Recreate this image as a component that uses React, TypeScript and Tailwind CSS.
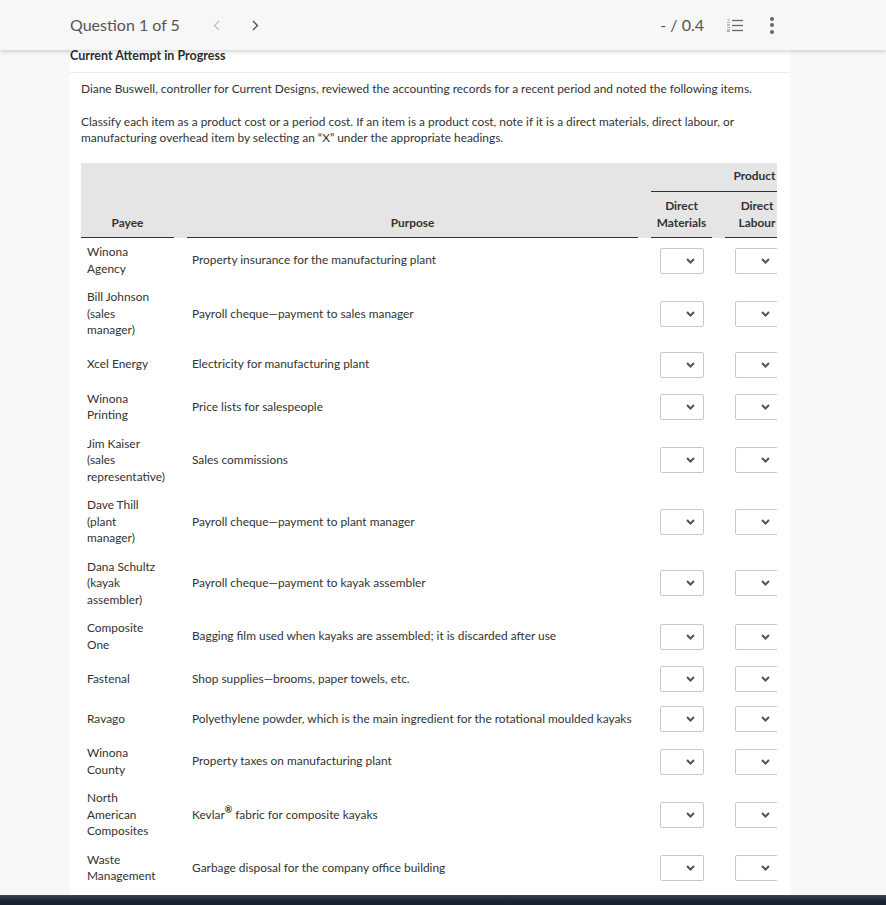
import React from 'react';

// --- DATA ---
interface Item {
  payee: string[];
  purpose: React.ReactNode;
}

const ITEMS: Item[] = [
  { payee: ['Winona', 'Agency'], purpose: 'Property insurance for the manufacturing plant' },
  { payee: ['Bill Johnson', '(sales', 'manager)'], purpose: 'Payroll cheque\u2014payment to sales manager' },
  { payee: ['Xcel Energy'], purpose: 'Electricity for manufacturing plant' },
  { payee: ['Winona', 'Printing'], purpose: 'Price lists for salespeople' },
  { payee: ['Jim Kaiser', '(sales', 'representative)'], purpose: 'Sales commissions' },
  { payee: ['Dave Thill', '(plant', 'manager)'], purpose: 'Payroll cheque\u2014payment to plant manager' },
  { payee: ['Dana Schultz', '(kayak', 'assembler)'], purpose: 'Payroll cheque\u2014payment to kayak assembler' },
  { payee: ['Composite', 'One'], purpose: 'Bagging film used when kayaks are assembled; it is discarded after use' },
  { payee: ['Fastenal'], purpose: 'Shop supplies\u2014brooms, paper towels, etc.' },
  { payee: ['Ravago'], purpose: 'Polyethylene powder, which is the main ingredient for the rotational moulded kayaks' },
  { payee: ['Winona', 'County'], purpose: 'Property taxes on manufacturing plant' },
  {
    payee: ['North', 'American', 'Composites'],
    purpose: (
      <>
        Kevlar<sup className="text-[9px] font-bold mr-[3px]">®</sup>fabric for composite kayaks
      </>
    ),
  },
  { payee: ['Waste', 'Management'], purpose: 'Garbage disposal for the company office building' },
];

const COLS = 'grid grid-cols-[93px_451px_61px_64px_61px_61px] gap-x-[13px]';

// --- SMALL PIECES ---
function Chevron({ dir, color }: { dir: 'left' | 'right'; color: string }) {
  return (
    <svg width="7" height="11" viewBox="0 0 7 11" fill="none">
      <polyline
        points={dir === 'left' ? '6,1 1.5,5.5 6,10' : '1,1 5.5,5.5 1,10'}
        stroke={color}
        strokeWidth="1.4"
      />
    </svg>
  );
}

function Dropdown() {
  return (
    <div className="w-[44px] h-[26px] bg-white border border-[#c8c8c8] rounded-[2px] flex items-center justify-end pr-[8px] shrink-0">
      <svg width="9" height="6" viewBox="0 0 9 6" fill="none">
        <polyline points="1,1 4.5,4.5 8,1" stroke="#555" strokeWidth="2" />
      </svg>
    </div>
  );
}

function ListIcon() {
  return (
    <svg width="16" height="13" viewBox="0 0 16 13" fill="none">
      <g fill="#888">
        <rect x="0.5" y="0.5" width="2" height="1" />
        <rect x="0" y="5.5" width="3" height="1" />
        <rect x="0" y="10.5" width="3" height="1" />
        <rect x="0" y="3" width="3" height="0.7" />
        <rect x="0" y="8" width="3" height="0.7" />
        <rect x="0" y="12.2" width="3" height="0.7" />
      </g>
      <g stroke="#666" strokeWidth="1.3">
        <line x1="5" y1="1.5" x2="16" y2="1.5" />
        <line x1="5" y1="6.5" x2="16" y2="6.5" />
        <line x1="5" y1="11.5" x2="16" y2="11.5" />
      </g>
    </svg>
  );
}

function Kebab() {
  return (
    <div className="flex flex-col gap-[2.5px]">
      <div className="w-[4px] h-[4px] rounded-full bg-[#666]" />
      <div className="w-[4px] h-[4px] rounded-full bg-[#666]" />
      <div className="w-[4px] h-[4px] rounded-full bg-[#666]" />
    </div>
  );
}

// --- MAIN ---
export default function App() {
  return (
    <div className="w-full h-[905px] bg-[#f8f8f8] flex flex-col overflow-hidden font-['Lato',sans-serif] text-[#333]">
      {/* Top bar */}
      <header className="h-[50px] shrink-0 bg-[#f7f7f7] shadow-[0_2px_4px_rgba(0,0,0,0.16)] relative z-10">
        <div className="ml-[70px] w-[720px] h-full flex items-center">
          <span className="text-[16px] text-[#555]">Question 1 of 5</span>
          <div className="ml-[33px]">
            <Chevron dir="left" color="#c2c2c2" />
          </div>
          <div className="ml-[32px]">
            <Chevron dir="right" color="#555" />
          </div>
          <div className="ml-auto flex items-center pr-[16px]">
            <span className="text-[16px] text-[#555]">- / 0.4</span>
            <div className="ml-[23px]">
              <ListIcon />
            </div>
            <div className="ml-[27px]">
              <Kebab />
            </div>
          </div>
        </div>
      </header>

      {/* Body */}
      <main className="flex-1 flex min-h-0">
        <section className="ml-[70px] w-[720px] bg-white flex flex-col">
          <div className="-mt-[3px] pb-[8px] text-[12.5px] font-bold leading-[17px] text-[#2d2d2d]">
            Current Attempt in Progress
          </div>

          <div className="border-t border-[#ececec] px-[11px] pt-[8px] text-[11.9px] leading-[16.5px]">
            <p className="mb-[16px]">
              Diane Buswell, controller for Current Designs, reviewed the accounting records for a recent period and noted the following items.
            </p>
            <p className="w-[680px]">
              Classify each item as a product cost or a period cost. If an item is a product cost, note if it is a direct materials, direct labour, or manufacturing overhead item by selecting an &ldquo;X&rdquo; under the appropriate headings.
            </p>

            {/* Table */}
            <div className="mt-[16px] w-[696px] overflow-hidden">
              <div className={`${COLS} w-max bg-[#e5e5e5] font-bold`}>
                <div className="row-span-2 self-end border-b border-[#333] pb-[6px] text-center">Payee</div>
                <div className="row-span-2 self-end border-b border-[#333] pb-[6px] text-center">Purpose</div>
                <div className="col-span-3 border-b border-[#333] pt-[5px] pb-[7px] pr-[5px] text-center">Product</div>
                <div className="border-b border-transparent" />
                <div className="border-b border-[#333] pt-[6px] pb-[6px] text-center">
                  Direct
                  <br />
                  Materials
                </div>
                <div className="border-b border-[#333] pt-[6px] pb-[6px] text-center">
                  Direct
                  <br />
                  Labour
                </div>
                <div className="border-b border-[#333] pt-[6px] pb-[6px] text-center">
                  Manufacturing
                  <br />
                  Overhead
                </div>
                <div className="border-b border-[#333] pt-[6px] pb-[6px] text-center">
                  Period
                  <br />
                  Costs
                </div>
              </div>

              {ITEMS.map((item, i) => (
                <div key={i} className={`${COLS} w-max`}>
                  <div className="flex flex-col justify-center py-[6px] pl-[6px] whitespace-nowrap">
                    {item.payee.map((line, j) => (
                      <div key={j}>{line}</div>
                    ))}
                  </div>
                  <div className="flex items-center pl-[5px] whitespace-nowrap">{item.purpose}</div>
                  {[0, 1, 2, 3].map((c) => (
                    <div key={c} className="flex items-center justify-center py-[7px]">
                      <Dropdown />
                    </div>
                  ))}
                </div>
              ))}
            </div>
          </div>
        </section>
      </main>

      {/* Taskbar edge */}
      <div className="h-[10px] shrink-0 bg-gradient-to-b from-[#3a4656] via-[#1d2735] to-[#18202c]" />
    </div>
  );
}
